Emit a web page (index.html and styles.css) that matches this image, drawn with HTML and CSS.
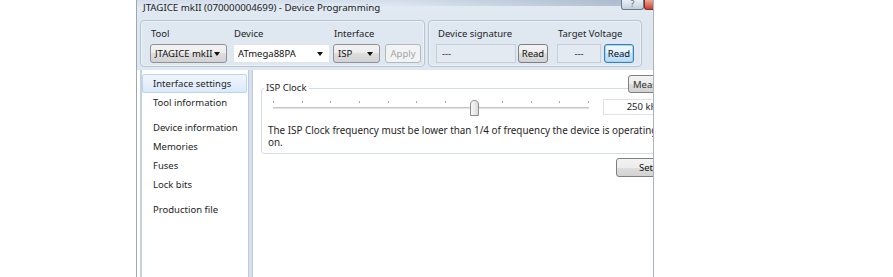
FILE: index.html
```html
<!DOCTYPE html>
<html lang="en">
<head>
    <meta charset="UTF-8">
    <title>JTAGICE mkII - Device Programming</title>
    <link rel="stylesheet" href="styles.css">
</head>
<body>
    <div class="window">
        <div class="titlebar">
            <span class="title">JTAGICE mkII (070000004699) - Device Programming</span>
            <div class="caption-btns">
                <span class="help-btn">?</span>
                <span class="close-btn"></span>
            </div>
        </div>

        <div class="toolbar">
            <div class="group group-tool">
                <div class="field">
                    <label>Tool</label>
                    <div class="combo combo-btn w-tool">JTAGICE mkII</div>
                </div>
                <div class="field">
                    <label>Device</label>
                    <div class="combo combo-edit w-device">ATmega88PA</div>
                </div>
                <div class="field">
                    <label>Interface</label>
                    <div class="combo combo-btn w-iface">ISP</div>
                </div>
                <div class="field">
                    <label>&nbsp;</label>
                    <button class="btn btn-apply" disabled>Apply</button>
                </div>
            </div>

            <div class="group group-read">
                <div class="field field-sig">
                    <label>Device signature</label>
                    <div class="row">
                        <div class="readout w-sig">---</div>
                        <button class="btn btn-read">Read</button>
                    </div>
                </div>
                <div class="field field-volt">
                    <label>Target Voltage</label>
                    <div class="row">
                        <div class="readout w-volt">---</div>
                        <button class="btn btn-read focused">Read</button>
                    </div>
                </div>
            </div>
        </div>

        <div class="main">
            <ul class="nav">
                <li class="selected">Interface settings</li>
                <li>Tool information</li>
                <li class="gap">Device information</li>
                <li>Memories</li>
                <li>Fuses</li>
                <li>Lock bits</li>
                <li class="gap">Production file</li>
            </ul>
            <div class="splitter"></div>
            <div class="content">
                <fieldset class="clock-group">
                    <legend>ISP Clock</legend>
                    <button class="btn btn-measure">Measure</button>
                    <div class="clock-row">
                        <div class="slider">
                            <div class="ticks">
                                <span></span><span></span><span></span><span></span>
                                <span></span><span></span><span></span><span></span>
                                <span></span><span></span><span></span><span></span>
                            </div>
                            <div class="track"></div>
                            <svg class="thumb" width="9" height="16" viewBox="0 0 9 16">
                                <defs>
                                    <linearGradient id="thumbFill" x1="0" y1="0" x2="1" y2="0">
                                        <stop offset="0" stop-color="#fbfbfb"/>
                                        <stop offset="1" stop-color="#d9d9d9"/>
                                    </linearGradient>
                                </defs>
                                <path d="M0.5 15.5 V5 Q0.5 0.5 4.5 0.5 Q8.5 0.5 8.5 5 V15.5 Z" fill="url(#thumbFill)" stroke="#8c8c8c"/>
                            </svg>
                        </div>
                        <div class="clock-value">250 kHz</div>
                    </div>
                    <p class="clock-note">The ISP Clock frequency must be lower than 1/4 of frequency the device is operating on.</p>
                </fieldset>
                <div class="actions">
                    <button class="btn btn-set">Set</button>
                </div>
            </div>
        </div>
    </div>
</body>
</html>
```

FILE: styles.css
```css
body {
    margin: 0;
    background-color: #fff;
    font-family: "Noto Sans", "Open Sans", sans-serif;
    font-size: 9.5px;
    color: #1e1e1e;
}
.window {
    margin-left: 136px;
    width: 518px;
    height: 277px;
    box-sizing: border-box;
    border-left: 1px solid #9ea8b4;
    border-right: 1px solid #a9b2bd;
    background-color: #dfe7f1;
    display: flex;
    flex-direction: column;
    overflow: hidden;
}

/* title bar */
.titlebar {
    height: 18px;
    flex-shrink: 0;
    display: flex;
    align-items: flex-start;
    padding-left: 6px;
    background:
        linear-gradient(90deg, rgba(255,255,255,0) 50%, rgba(110,132,160,0.45) 100%) top / 100% 6px no-repeat,
        linear-gradient(180deg, #d3deea 0, #e1e9f3 7px, #dfe7f1 100%);
}
.title {
    line-height: 15px;
    font-size: 9.7px;
    color: #1a1a1a;
    flex: 1;
    white-space: nowrap;
}
.caption-btns {
    display: flex;
    flex-shrink: 0;
}
.help-btn {
    width: 21px;
    height: 9px;
    line-height: 8px;
    text-align: center;
    font-size: 9px;
    color: #5b6b7e;
    border: 1px solid #6c7a8c;
    border-top: none;
    border-radius: 0 0 3px 3px;
    background: linear-gradient(#e9eef4, #c4cfdc);
}
.close-btn {
    width: 8px;
    height: 9px;
    border: 1px solid #7a2f24;
    border-top: none;
    border-right: none;
    border-radius: 0 0 0 3px;
    background: linear-gradient(#e9a797, #c8432c);
}

/* toolbar */
.toolbar {
    height: 52px;
    flex-shrink: 0;
    display: flex;
    gap: 3px;
    padding: 2px 0 0 3px;
    box-sizing: border-box;
}
.group {
    height: 47px;
    flex-shrink: 0;
    box-sizing: border-box;
    border: 1px solid #b7c4d3;
    border-radius: 4px;
    box-shadow: inset 0 0 0 1px rgba(255,255,255,0.45);
    display: flex;
    padding: 6px 0 0 9px;
}
.group-tool {
    width: 285px;
}
.group-read {
    width: 214px;
    padding-left: 7px;
}
.field {
    display: flex;
    flex-direction: column;
    margin-right: 6px;
}
.field label {
    height: 14px;
    line-height: 14px;
    padding-left: 1px;
    margin-bottom: 3px;
    white-space: nowrap;
}
.row {
    display: flex;
    gap: 2px;
}
.field-sig {
    margin-right: 9px;
}
.field-sig label {
    padding-left: 2px;
}
.field-volt .row {
    gap: 3px;
}
.combo {
    height: 19px;
    box-sizing: border-box;
    display: flex;
    align-items: center;
    padding: 0 6px 0 4px;
    border-radius: 3px;
    color: #111;
    white-space: nowrap;
}
.combo::after {
    content: "";
    margin-left: auto;
    flex-shrink: 0;
    border-left: 3px solid transparent;
    border-right: 3px solid transparent;
    border-top: 4px solid #111;
}
.combo-btn {
    border: 1px solid #8f9296;
    background: linear-gradient(#f3f3f3 0, #ececec 50%, #dedede 50%, #d2d2d2 100%);
}
.combo-edit {
    border: 1px solid #e1e5ea;
    background-color: #fff;
    border-radius: 0;
}
.w-tool { width: 77px; }
.w-device { width: 97px; }
.w-iface { width: 47px; }
.field:nth-child(2) { margin-right: 3px; }
.field:nth-child(3) { margin-right: 5px; }

.btn {
    height: 19px;
    box-sizing: border-box;
    font-family: inherit;
    font-size: inherit;
    color: #111;
    padding: 0;
    border: 1px solid #7d7f82;
    border-radius: 3px;
    background: linear-gradient(#f3f3f3 0, #ececec 50%, #dedede 50%, #d2d2d2 100%);
}
.btn-apply {
    width: 36px;
    color: #a2a4a7;
    border-color: #b4b8bc;
    background: #f2f3f4;
}
.btn-read {
    width: 30px;
}
.btn-read.focused {
    border-color: #3c7fb1;
    background: linear-gradient(#f0f8fe 0, #dff0fc 50%, #c7e5fb 50%, #b9ddf8 100%);
    box-shadow: inset 0 0 0 1px #a6d3f5;
}
.readout {
    height: 19px;
    box-sizing: border-box;
    border: 1px solid #c6ced8;
    background-color: #e4eaf1;
    line-height: 17px;
    padding-left: 5px;
}
.w-sig { width: 80px; }
.w-volt {
    width: 44px;
    padding-left: 0;
    text-align: center;
}

/* main area */
.main {
    flex: 1;
    display: flex;
    background-color: #fff;
}
.nav {
    list-style: none;
    flex-shrink: 0;
    margin: 0 0 0 3px;
    padding: 4px 1px 0 0;
    width: 108px;
    box-sizing: border-box;
    border-left: 2px solid #c6d2e0;
}
.nav li {
    height: 19px;
    line-height: 19px;
    padding-left: 11px;
    box-sizing: border-box;
    white-space: nowrap;
}
.nav li.gap {
    margin-top: 6px;
}
.nav li.selected {
    border: 1px solid #b9d4f2;
    border-radius: 2px;
    padding-left: 10px;
    line-height: 17px;
    background: linear-gradient(#f0f6fe, #dce9f9);
}
.splitter {
    width: 5px;
    flex-shrink: 0;
    background: linear-gradient(90deg, #b7c5d7, #dce5f0 40%, #dce5f0 60%, #b7c5d7);
}
.content {
    flex-shrink: 0;
    width: 430px;
    padding: 11px 0 0 8px;
}
.clock-group {
    position: relative;
    width: 406px;
    margin: 0;
    padding: 1px 6px 5px 6px;
    border: 1px solid #d3dde6;
    border-radius: 3px;
}
.clock-group legend {
    padding: 0 2px;
    margin-left: -4px;
    line-height: 14px;
}
.btn-measure {
    position: absolute;
    left: 366px;
    top: -20px;
    width: 60px;
    height: 18px;
    text-align: left;
    padding-left: 4px;
    color: #333;
}
.clock-row {
    display: flex;
    align-items: flex-start;
    margin-top: 2px;
}
.slider {
    position: relative;
    margin-left: 5px;
    width: 316px;
    height: 18px;
}
.ticks {
    display: flex;
    justify-content: space-between;
    padding-top: 3px;
    height: 2px;
}
.ticks span {
    width: 1px;
    height: 2px;
    background-color: #a8a8a8;
}
.track {
    margin-top: 4px;
    height: 1px;
    border-top: 1px solid #c4c4c4;
    border-bottom: 1px solid #fafafa;
    background-color: #e6e6e6;
}
.thumb {
    position: absolute;
    left: 197px;
    top: 2px;
}
.clock-value {
    margin-left: 14px;
    width: 64px;
    height: 16px;
    box-sizing: border-box;
    border: 1px solid #dfe3e8;
    text-align: right;
    padding-right: 4px;
    line-height: 14px;
    margin-top: 1px;
}
.clock-note {
    max-width: 392px;
    margin: 8px 0 0 0;
    font-size: 9.9px;
    line-height: 12px;
}
.actions {
    padding: 4px 0 0 355px;
}
.btn-set {
    width: 60px;
    height: 19px;
}
```
